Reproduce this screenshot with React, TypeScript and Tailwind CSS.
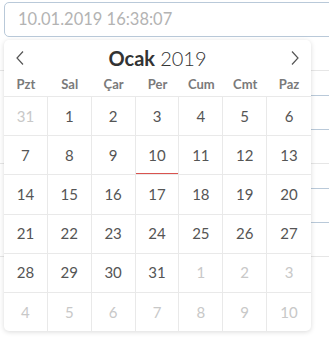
import React from 'react';

const dayNames = ['Pzt', 'Sal', 'Çar', 'Per', 'Cum', 'Cmt', 'Paz'];

// 6 weeks shown, muted = days outside January
const weeks: { d: number; muted?: boolean; today?: boolean }[][] = [
  [{ d: 31, muted: true }, { d: 1 }, { d: 2 }, { d: 3 }, { d: 4 }, { d: 5 }, { d: 6 }],
  [{ d: 7 }, { d: 8 }, { d: 9 }, { d: 10, today: true }, { d: 11 }, { d: 12 }, { d: 13 }],
  [{ d: 14 }, { d: 15 }, { d: 16 }, { d: 17 }, { d: 18 }, { d: 19 }, { d: 20 }],
  [{ d: 21 }, { d: 22 }, { d: 23 }, { d: 24 }, { d: 25 }, { d: 26 }, { d: 27 }],
  [{ d: 28 }, { d: 29 }, { d: 30 }, { d: 31 }, { d: 1, muted: true }, { d: 2, muted: true }, { d: 3, muted: true }],
  [4, 5, 6, 7, 8, 9, 10].map((d) => ({ d, muted: true })),
];

const FormBlock: React.FC<{ first?: boolean }> = ({ first }) => (
  <div className="flex flex-col">
    <div className="ml-[4px] w-[340px] h-[35px] border border-[#b9c9d9] rounded-[5px] flex items-center pl-[13px]">
      {first && <span className="text-[16.5px] text-[#b3b3b3]">10.01.2019 16:38:07</span>}
    </div>
    <div className="h-[33px]" />
    <div className="h-px bg-[#e6e6e6]" />
    <div className="h-[24px]" />
  </div>
);

export default function App() {
  return (
    <div
      className="relative w-[329px] h-[338px] overflow-hidden bg-white"
      style={{ fontFamily: 'Lato, "Open Sans", sans-serif' }}
    >
      <div className="pt-[2px] flex flex-col">
        <FormBlock first />
        <FormBlock />
        <FormBlock />
      </div>

      {/* Date picker popup */}
      <div className="absolute left-[4px] top-[40px] w-[307px] h-[291px] bg-white rounded-[5px] shadow-[0_1px_5px_rgba(0,0,0,0.15)] overflow-hidden flex flex-col">
        <div className="h-[34px] flex items-center justify-between px-[11px] pt-[2px]">
          <svg width="10" height="16" viewBox="0 0 10 16" fill="none">
            <polyline points="8,1.5 2,8 8,14.5" stroke="#555" strokeWidth="1.2" />
          </svg>
          <div className="text-[20px] text-[#333] leading-none">
            <span className="font-bold">Ocak</span> <span className="font-light">2019</span>
          </div>
          <svg width="10" height="16" viewBox="0 0 10 16" fill="none">
            <polyline points="2,1.5 8,8 2,14.5" stroke="#555" strokeWidth="1.2" />
          </svg>
        </div>
        <div className="grid grid-cols-7 h-[22px] items-center">
          {dayNames.map((n) => (
            <div key={n} className="text-center text-[13px] font-bold text-[#7a7a7a]">
              {n}
            </div>
          ))}
        </div>
        <div className="grid grid-cols-7 grid-rows-6 flex-1">
          {weeks.flat().map((c, i) => (
            <div
              key={i}
              className={`flex items-center justify-center border-t border-[#e9e9e9] text-[15px] ${
                i % 7 !== 6 ? 'border-r' : ''
              } ${c.muted ? 'text-[#c8c8c8]' : 'text-[#555]'} ${
                c.today ? 'shadow-[inset_0_-1px_0_#d9534f]' : ''
              }`}
            >
              {c.d}
            </div>
          ))}
        </div>
      </div>
    </div>
  );
}
